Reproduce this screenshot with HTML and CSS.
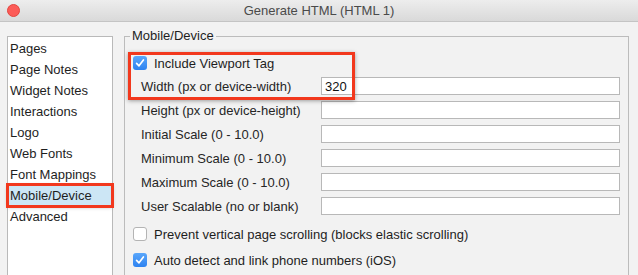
FILE: index.html
```html
<!DOCTYPE html>
<html>
<head>
    <title>Generate HTML (HTML 1)</title>
    <link rel="stylesheet" href="styles.css">
</head>
<body>
    <div class="titlebar">
        <div class="controls"><span class="close-button"></span></div>
        <div class="title">Generate HTML (HTML 1)</div>
        <div></div>
    </div>

    <div class="main">
        <ul class="nav-list">
            <li>Pages</li>
            <li>Page Notes</li>
            <li>Widget Notes</li>
            <li>Interactions</li>
            <li>Logo</li>
            <li>Web Fonts</li>
            <li>Font Mappings</li>
            <li class="selected">Mobile/Device</li>
            <li>Advanced</li>
        </ul>

        <fieldset class="settings">
            <legend>Mobile/Device</legend>
            <div class="settings-body">
                <div class="highlight"></div>

                <div class="check-row">
                    <span class="checkbox checked">
                        <svg width="14" height="14" viewBox="0 0 14 14"><path d="M3.6 7.4 L6 9.8 L10.4 4" fill="none" stroke="#fff" stroke-width="1.7" stroke-linecap="round" stroke-linejoin="round"/></svg>
                    </span>
                    <span>Include Viewport Tag</span>
                </div>

                <div class="fields">
                    <label>Width (px or device-width)</label>
                    <input type="text" value="320">
                    <label>Height (px or device-height)</label>
                    <input type="text">
                    <label>Initial Scale (0 - 10.0)</label>
                    <input type="text">
                    <label>Minimum Scale (0 - 10.0)</label>
                    <input type="text">
                    <label>Maximum Scale (0 - 10.0)</label>
                    <input type="text">
                    <label>User Scalable (no or blank)</label>
                    <input type="text">
                </div>

                <div class="check-row spaced">
                    <span class="checkbox"></span>
                    <span>Prevent vertical page scrolling (blocks elastic scrolling)</span>
                </div>
                <div class="check-row">
                    <span class="checkbox checked">
                        <svg width="14" height="14" viewBox="0 0 14 14"><path d="M3.6 7.4 L6 9.8 L10.4 4" fill="none" stroke="#fff" stroke-width="1.7" stroke-linecap="round" stroke-linejoin="round"/></svg>
                    </span>
                    <span>Auto detect and link phone numbers (iOS)</span>
                </div>
            </div>
        </fieldset>
    </div>
</body>
</html>
```

FILE: styles.css
```css
body {
    margin: 0;
    height: 275px;
    overflow: hidden;
    background-color: #f2f2f2;
    font-family: "Liberation Sans", Arial, sans-serif;
    font-size: 13px;
    color: #1e1e1e;
}
.titlebar {
    height: 21px;
    border-bottom: 1px solid #c4c4c4;
    background: linear-gradient(#ededed, #d9d9d9);
    display: grid;
    grid-template-columns: 1fr auto 1fr;
    align-items: center;
}
.controls {
    display: flex;
    padding-left: 7px;
}
.close-button {
    width: 11px;
    height: 11px;
    border-radius: 50%;
    background-color: #fc5b57;
    border: 0.5px solid #e2463f;
}
.title {
    color: #4a4a4a;
    font-size: 13px;
}
.main {
    display: flex;
    align-items: flex-start;
    padding: 6px 9px 0 7px;
}
.nav-list {
    list-style: none;
    margin: 8px 0 0 0;
    padding: 1px 0 0 0;
    width: 104px;
    height: 238px;
    background-color: #fff;
    border: 1px solid #b9b9b9;
    border-bottom: none;
}
.nav-list li {
    height: 21px;
    line-height: 21px;
    padding-left: 2px;
}
.nav-list li.selected {
    background-color: #cce6f5;
    outline: 3px solid #f2381d;
    outline-offset: -1px;
    box-shadow: 0 1px 4px rgba(0, 0, 0, 0.35);
}
.settings {
    flex: 1;
    margin: 0 0 0 11px;
    padding: 0;
    height: 247px;
    box-sizing: border-box;
    border: 1px solid #bcbcbc;
    border-bottom: none;
    min-width: 0;
}
.settings legend {
    margin-left: 5px;
    padding: 0 2px;
    line-height: 16px;
}
.settings-body {
    position: relative;
    padding: 10px 0 0 8px;
}
.highlight {
    position: absolute;
    left: 3px;
    top: 8px;
    width: 221px;
    height: 42px;
    border: 3px solid #f2381d;
    box-shadow: 0 1px 4px rgba(0, 0, 0, 0.35);
    z-index: 1;
    pointer-events: none;
}
.check-row {
    display: flex;
    align-items: center;
    gap: 7px;
    height: 18px;
}
.check-row.spaced {
    margin-top: 10px;
    margin-bottom: 8px;
}
.checkbox {
    width: 12px;
    height: 12px;
    border: 1px solid #b4b4b4;
    border-radius: 3px;
    background-color: #fff;
    display: flex;
}
.checkbox.checked {
    width: 14px;
    height: 14px;
    border: none;
    background: linear-gradient(#5aa7fb, #2d82f0);
}
.fields {
    display: grid;
    grid-template-columns: 180px 299px;
    row-gap: 6px;
    margin-top: 5px;
    padding-left: 8px;
    align-items: center;
}
.fields label {
    color: #262626;
}
.fields input {
    box-sizing: border-box;
    height: 18px;
    margin: 0;
    padding: 0 3px;
    border: 1px solid #b8b8b8;
    background-color: #fff;
    font-family: inherit;
    font-size: 13px;
    color: #111;
    outline: none;
}
```
